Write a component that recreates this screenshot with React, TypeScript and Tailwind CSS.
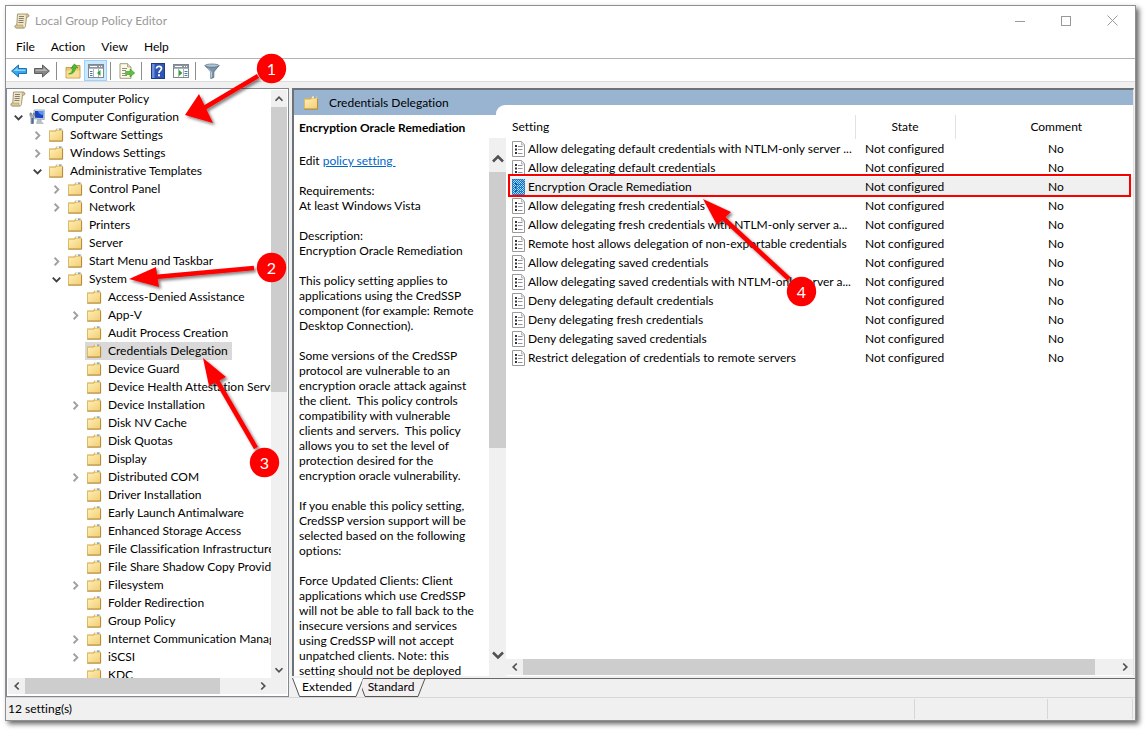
import type { ReactNode } from "react";

type Node = { label: string; level: 0 | 1 | 2 | 3 | 4; state?: "open" | "closed"; icon?: "scroll" | "computer"; selected?: boolean };

const tree: Node[] = [
  { label: "Local Computer Policy", level: 0, icon: "scroll" },
  { label: "Computer Configuration", level: 1, state: "open", icon: "computer" },
  { label: "Software Settings", level: 2, state: "closed" },
  { label: "Windows Settings", level: 2, state: "closed" },
  { label: "Administrative Templates", level: 2, state: "open" },
  { label: "Control Panel", level: 3, state: "closed" },
  { label: "Network", level: 3, state: "closed" },
  { label: "Printers", level: 3 },
  { label: "Server", level: 3 },
  { label: "Start Menu and Taskbar", level: 3, state: "closed" },
  { label: "System", level: 3, state: "open" },
  { label: "Access-Denied Assistance", level: 4 },
  { label: "App-V", level: 4, state: "closed" },
  { label: "Audit Process Creation", level: 4 },
  { label: "Credentials Delegation", level: 4, selected: true },
  { label: "Device Guard", level: 4 },
  { label: "Device Health Attestation Service", level: 4 },
  { label: "Device Installation", level: 4, state: "closed" },
  { label: "Disk NV Cache", level: 4 },
  { label: "Disk Quotas", level: 4 },
  { label: "Display", level: 4 },
  { label: "Distributed COM", level: 4, state: "closed" },
  { label: "Driver Installation", level: 4 },
  { label: "Early Launch Antimalware", level: 4 },
  { label: "Enhanced Storage Access", level: 4 },
  { label: "File Classification Infrastructure", level: 4 },
  { label: "File Share Shadow Copy Provider", level: 4 },
  { label: "Filesystem", level: 4, state: "closed" },
  { label: "Folder Redirection", level: 4 },
  { label: "Group Policy", level: 4 },
  { label: "Internet Communication Management", level: 4, state: "closed" },
  { label: "iSCSI", level: 4, state: "closed" },
  { label: "KDC", level: 4 },
];

const indents = ["pl-px", "pl-0", "pl-[19px]", "pl-[38px]", "pl-[57px]"];

const settings = [
  "Allow delegating default credentials with NTLM-only server ...",
  "Allow delegating default credentials",
  "Encryption Oracle Remediation",
  "Allow delegating fresh credentials",
  "Allow delegating fresh credentials with NTLM-only server a...",
  "Remote host allows delegation of non-exportable credentials",
  "Allow delegating saved credentials",
  "Allow delegating saved credentials with NTLM-only server a...",
  "Deny delegating default credentials",
  "Deny delegating fresh credentials",
  "Deny delegating saved credentials",
  "Restrict delegation of credentials to remote servers",
];

const description = [
  ["Requirements:", "At least Windows Vista"],
  ["Description:", "Encryption Oracle Remediation"],
  ["This policy setting applies to", "applications using the CredSSP", "component (for example: Remote", "Desktop Connection)."],
  ["Some versions of the CredSSP", "protocol are vulnerable to an", "encryption oracle attack against", "the client.  This policy controls", "compatibility with vulnerable", "clients and servers.  This policy", "allows you to set the level of", "protection desired for the", "encryption oracle vulnerability."],
  ["If you enable this policy setting,", "CredSSP version support will be", "selected based on the following", "options:"],
  ["Force Updated Clients: Client", "applications which use CredSSP", "will not be able to fall back to the", "insecure versions and services", "using CredSSP will not accept", "unpatched clients. Note: this", "setting should not be deployed"],
];

function FolderIcon() {
  return (
    <svg className="h-4 w-4 shrink-0" viewBox="0 0 16 16" aria-hidden="true">
      <path d="M1 3.500h6l1.500-2H14l.5 2v10.500H1z" fill="#dcb55c" />
      <rect x="9" y="1.600" width="5" height="2" fill="#fff" />
      <rect x="11" y="1.600" width="2.500" height="1.200" fill="#4a90d9" />
      <path d="M1.500 4.200h6.200l1.300-1h5.500v10.600h-13z" fill="url(#folder)" />
      <path d="M1.500 4.200h6.200l1.300-1h5.500v10.600h-13z" fill="none" stroke="#dcb55c" strokeWidth=".8" />
      <path d="M1.200 14.200h13.400V4" fill="none" stroke="#ad8535" strokeWidth=".9" />
    </svg>
  );
}

function ScrollIcon() {
  return (
    <svg className="h-4 w-4 shrink-0" viewBox="0 0 16 16" aria-hidden="true">
      <path d="M3.500 1h9.500c2.400 0 2.400 3 .6 3h-1.100l-1 8.500c0 1.500-.5 2.500-2 2.500H2.200c-1.800 0-1.500-3 0-3h.6z" fill="#f1e7c6" stroke="#9c8f6b" strokeWidth=".9" />
      <path d="M2 12h7c-.6 1 0 2.800 1 2.900H2.200C.8 15 .8 12 2 12zM12.600 1.300c-.9.700-.4 2.600.1 2.700h1c1.500-.1 1.400-2.500-.4-2.700z" fill="#d9c58a" stroke="#9c8f6b" strokeWidth=".5" />
      <path d="M5 3.500h5M4.800 5.500h5M4.600 7.500h5M4.400 9.500h5" stroke="#77736a" strokeWidth=".9" />
    </svg>
  );
}

function ComputerIcon() {
  return (
    <svg className="h-4 w-4 shrink-0" viewBox="0 0 16 16" aria-hidden="true">
      <path d="M5 1h10.300v9.500L5 9.800z" fill="#dfe5ea" stroke="#8c98a4" strokeWidth=".7" />
      <path d="M6 2h8.300v7.300L6 8.800z" fill="#1747c4" />
      <path d="M9 2h5.300v4C12 6 10 5 9 2z" fill="#5b93ee" />
      <path d="M8.500 10.500h3.500l.5 2.500 2 1.500h-7z" fill="#b9c1c8" stroke="#89939c" strokeWidth=".4" />
      <path d="M1 4v2.500L2 8v6.500h2.500V8l1-1.500V4H4.300v2H2.400V4z" fill="#aeb6bd" stroke="#59636c" strokeWidth=".6" />
      <path d="M2.600 9h1.500v5.500H2.600z" fill="#426fa5" />
    </svg>
  );
}

function PolicyIcon({ active }: { active?: boolean }) {
  return (
    <svg className="h-4 w-4 shrink-0" viewBox="0 0 16 16" aria-hidden="true">
      <path d="M.5.5h9L12.500 3.500v12H.5z" fill="#fff" stroke="#9a9a9a" />
      <path d="M9.500.5v3.500h3" fill="#e8e8e8" stroke="#aaa" strokeWidth=".8" />
      <path d="M3 4h2v2H3zM3 7.500h2v2H3zM3 11h2v2H3z" fill="#333" />
      <path d="M6 5.500h4.500M6 8.500h4.500M6 12.500h4.500" stroke="#8d91a0" />
      {active && <rect width="13" height="16" fill="url(#checker)" />}
    </svg>
  );
}

type Dir = "up" | "down" | "left" | "right";
const chevronPaths: Record<Dir, string> = {
  up: "M4 10l4-4 4 4",
  down: "M4 6l4 4 4-4",
  left: "M10 4L6 8l4 4",
  right: "M6 4l4 4-4 4",
};

function Chevron({ dir, className }: { dir: Dir; className: string }) {
  return (
    <svg className={className} viewBox="0 0 16 16" fill="none" stroke="currentColor" strokeWidth="2" aria-hidden="true">
      <path d={chevronPaths[dir]} />
    </svg>
  );
}

function ScrollButton({ dir, big }: { dir: Dir; big?: boolean }) {
  return (
    <button type="button" aria-label={`Scroll ${dir}`} className="flex h-full w-full items-center justify-center text-[#505050]">
      <Chevron dir={dir} className={big ? "h-5 w-5 shrink-0" : "h-[14px] w-[14px] shrink-0"} />
    </button>
  );
}

function TreePane() {
  return (
    <nav aria-label="Policy tree" className="flex w-[283px] shrink-0 flex-col border border-[#828790] bg-white p-px">
      <div className="flex min-h-0 flex-1">
        <ul className="min-w-0 flex-1 overflow-hidden">
          {tree.map((n) => (
            <li key={n.label} className={`flex h-[18px] items-center ${indents[n.level]}`}>
              {n.level > 0 && (
                <span className="flex w-5 shrink-0 items-center justify-center">
                  {n.state && (
                    <button type="button" aria-label={`Toggle ${n.label}`} className={n.state === "open" ? "text-[#404040]" : "text-[#a0a0a0]"}>
                      <Chevron dir={n.state === "open" ? "down" : "right"} className="h-[15px] w-[15px]" />
                    </button>
                  )}
                </span>
              )}
              <button type="button" className={`flex h-[18px] items-center gap-[6px] pr-1 pl-px whitespace-nowrap ${n.selected ? "bg-[#d9d9d9]" : ""}`}>
                {n.icon === "scroll" ? <ScrollIcon /> : n.icon === "computer" ? <ComputerIcon /> : <FolderIcon />}
                <span>{n.label}</span>
              </button>
            </li>
          ))}
        </ul>
        <div className="flex w-4 shrink-0 flex-col bg-[#f0f0f0]">
          <div className="h-[17px]"><ScrollButton dir="up" /></div>
          <div className="flex flex-1 flex-col">
            <div className="grow-[286] bg-[#cdcdcd]" />
            <div className="grow-[270]" />
          </div>
          <div className="h-[17px]"><ScrollButton dir="down" /></div>
        </div>
      </div>
      <div className="mb-px flex h-4 shrink-0 bg-[#f0f0f0]">
        <div className="w-[17px]"><ScrollButton dir="left" /></div>
        <div className="flex flex-1">
          <div className="grow-[195] bg-[#cdcdcd]" />
          <div className="grow-[34]" />
        </div>
        <div className="w-[17px]"><ScrollButton dir="right" /></div>
        <div className="w-4" />
      </div>
    </nav>
  );
}

function DescriptionPane() {
  return (
    <section className="flex w-[212px] shrink-0 flex-col">
      <h2 className="flex h-[23px] shrink-0 items-center pt-[3px] pl-[5px] font-bold whitespace-nowrap">Encryption Oracle Remediation</h2>
      <div className="flex min-h-0 flex-1">
        <div className="min-w-0 flex-1 overflow-hidden pt-[15px] pl-[5px] leading-[15px] whitespace-pre">
          <p className="mb-[15px]">Edit <a href="#policy" className="text-[#0066cc] underline">policy setting </a></p>
          {description.map((lines) => (
            <p key={lines[0]} className="mb-[15px]">{lines.join("\n")}</p>
          ))}
        </div>
        <div className="flex w-[17px] shrink-0 flex-col bg-[#f0f0f0]">
          <div className="h-[34px] pt-2"><ScrollButton dir="up" big /></div>
          <div className="flex flex-1 flex-col">
            <div className="grow-[276] bg-[#cdcdcd]" />
            <div className="grow-[194]" />
          </div>
          <div className="h-[34px] pb-2"><ScrollButton dir="down" big /></div>
        </div>
      </div>
    </section>
  );
}

function SettingsPane() {
  return (
    <section className="flex min-w-0 flex-1 flex-col">
      <div className="relative min-h-0 flex-1 overflow-hidden pl-[2px]">
        <table className="w-[649px] table-fixed border-collapse">
          <colgroup>
            <col className="w-[347px]" />
            <col className="w-[100px]" />
            <col className="w-[202px]" />
          </colgroup>
          <thead>
            <tr className="h-6">
              <th className="border-r border-[#e2e2e2] p-0 pl-1 text-left font-normal">Setting</th>
              <th className="border-r border-[#e2e2e2] p-0 font-normal">State</th>
              <th className="p-0 font-normal">Comment</th>
            </tr>
          </thead>
          <tbody>
            {settings.map((s, i) => (
              <tr key={s} className={`h-[19px] ${i === 2 ? "bg-[#f0f0f0]" : ""}`}>
                <td className="p-0">
                  <button type="button" className="flex h-[19px] items-center pl-[4px] whitespace-nowrap">
                    <PolicyIcon active={i === 2} />
                    <span>{s}</span>
                  </button>
                </td>
                <td className="p-0 pl-[10px] whitespace-nowrap">Not configured</td>
                <td className="p-0 text-center">No</td>
              </tr>
            ))}
          </tbody>
        </table>
        <div className="pointer-events-none absolute top-[59px] right-[2px] left-[2px] h-[23px] border-2 border-[#f80000]" />
      </div>
      <div className="mb-px flex h-4 shrink-0 bg-[#f0f0f0]">
        <div className="w-[17px]"><ScrollButton dir="left" /></div>
        <div className="flex flex-1">
          <div className="grow-[572] bg-[#cdcdcd]" />
          <div className="grow-[21]" />
        </div>
        <div className="w-[17px]"><ScrollButton dir="right" /></div>
      </div>
    </section>
  );
}

function ToolButton({ label, active, children }: { label: string; active?: boolean; children: ReactNode }) {
  return (
    <button type="button" aria-label={label} className={`flex h-[21px] w-[23px] items-center justify-center ${active ? "bg-[#cce8ff] outline outline-[#99d1ff] -outline-offset-1" : ""}`}>
      <svg className="h-4 w-4" viewBox="0 0 16 16">{children}</svg>
    </button>
  );
}

const Separator = () => <span className="mr-1 ml-[3px] h-[18px] w-px bg-[#8d8d8d]" />;

function Pane({ flip }: { flip?: boolean }) {
  return (
    <>
      <rect x=".5" y="1.500" width="15" height="13" fill="#fff" stroke="#7f8790" />
      <path d="M1 2h14v3H1z" fill="#8c969f" />
      <path d="M2 3.500h7M11 3.500h1M13 3.500h1" stroke="#fff" />
      <path d="M1 5.500h14M5.500 6v8M10.500 6v8" stroke="#9ba3aa" strokeWidth=".8" />
      {flip ? (
        <>
          <path d="M6 7v6l3.500-3z" fill="#2fa52c" />
          <path d="M11.500 8.500h3M11.500 10.500h3M11.500 12.500h3" stroke="#4a76b8" />
        </>
      ) : (
        <>
          <path d="M12.500 7v6L9 10z" fill="#2fa52c" />
          <path d="M2 8.500h2.500M2 10.500h2.500M2 12.500h2.500" stroke="#4a76b8" />
        </>
      )}
    </>
  );
}

function Toolbar() {
  return (
    <div className="flex h-[23px] shrink-0 items-center border-b border-[#dcdcdc] bg-white pt-px pl-px">
      <ToolButton label="Back">
        <path d="M.6 8l6.900-6v3.500h8v5h-8V14z" fill="#35a7ea" stroke="#1c6fb4" />
        <path d="M2.500 8l4-3.400v2h8V8z" fill="#8ad4fa" />
      </ToolButton>
      <ToolButton label="Forward">
        <path d="M15.400 8L8.500 2v3.500h-8v5h8V14z" fill="#878787" stroke="#5d5d5d" />
        <path d="M13.500 8l-4-3.400v2h-8V8z" fill="#b5b5b5" />
      </ToolButton>
      <Separator />
      <ToolButton label="Up one level">
        <path d="M1 4.500h6l1-2h7v12.500H1z" fill="#edc96e" stroke="#b88f38" strokeWidth=".8" />
        <path d="M1.500 7.500h13v7h-13z" fill="#f8df95" />
        <path d="M3.500 11C6 10.500 7.500 8.500 8 5L6 5.500 9.500.8l3.500 4.200-2.300-.2C10 8.500 8 11.500 3.500 11z" fill="#45bd34" stroke="#238a1c" strokeWidth=".5" />
      </ToolButton>
      <ToolButton label="Show or hide console tree" active><Pane /></ToolButton>
      <Separator />
      <ToolButton label="Export list">
        <path d="M1 .7h7.500L12 4v11.300H1z" fill="#fffbe5" stroke="#999274" strokeWidth=".9" />
        <path d="M8.500.7V4H12" fill="#e7e0bf" stroke="#999274" strokeWidth=".7" />
        <path d="M3 5.500h5M3 7.500h4M3 10.500h3M3 12.500h5" stroke="#8c8c8c" />
        <path d="M6.500 8.500h4.500V6l4.700 4-4.700 4v-2.500H6.500z" fill="#61c13e" stroke="#329123" strokeWidth=".6" />
      </ToolButton>
      <Separator />
      <ToolButton label="Help">
        <rect x="1.500" y=".5" width="13" height="15" fill="#2f56b4" stroke="#1c3a85" />
        <path d="M2 1h2.500v14H2z" fill="#6d8fdb" />
        <path d="M6.500 5.600c0-3 5-2.900 5 0 0 2-2.500 2-2.500 4.300" fill="none" stroke="#fff" strokeWidth="1.700" />
        <rect x="8" y="11.300" width="2" height="2" fill="#fff" />
      </ToolButton>
      <ToolButton label="Show or hide action pane"><Pane flip /></ToolButton>
      <Separator />
      <ToolButton label="Filter">
        <path d="M1 2.500h14L9.800 9v5.500l-3 1V9z" fill="#7893aa" stroke="#526b80" strokeWidth=".8" />
        <ellipse cx="8" cy="2.600" rx="7" ry="1.600" fill="#b4c6d4" stroke="#526b80" strokeWidth=".7" />
        <path d="M3.500 5l3.900 4v5.500" fill="none" stroke="#c4d4e0" />
      </ToolButton>
    </div>
  );
}

const marks = [
  { n: 1, cx: 271.5, cy: 68.5, head: "185,115 199,94 213,123", x1: 258, y1: 76, x2: 204, y2: 108 },
  { n: 2, cx: 271.5, cy: 267.5, head: "129,279 156,267 159,287", x1: 254, y1: 268, x2: 155, y2: 277 },
  { n: 3, cx: 264.5, cy: 462.5, head: "203,358 226,377 209,386", x1: 256, y1: 448, x2: 216, y2: 379 },
  { n: 4, cx: 801.5, cy: 291.5, head: "703,199 731,212 717,225", x1: 789, y1: 279, x2: 722, y2: 217 },
];

function Annotations() {
  return (
    <svg className="pointer-events-none absolute top-0 left-0 h-full w-full overflow-hidden" aria-hidden="true">
      <defs>
        <linearGradient id="folder" x1="0" y1="0" x2="1" y2="1">
          <stop offset="0" stopColor="#fff0b8" />
          <stop offset="1" stopColor="#f2cd72" />
        </linearGradient>
        <pattern id="checker" width="2" height="2" patternUnits="userSpaceOnUse">
          <rect width="2" height="2" fill="#0078d7" fillOpacity=".3" />
          <path d="M0 0h1v1H0zM1 1h1v1H1z" fill="#0078d7" />
        </pattern>
        <filter id="shade" x="-20%" y="-20%" width="150%" height="150%">
          <feDropShadow dx="2" dy="2" stdDeviation="1.500" floodColor="#000" floodOpacity=".5" />
        </filter>
      </defs>
      {marks.map((m) => (
        <g key={m.n}>
          <g filter="url(#shade)" fill="#f00" stroke="#f00">
            <line x1={m.x1} y1={m.y1} x2={m.x2} y2={m.y2} strokeWidth="4.500" />
            <polygon points={m.head} strokeWidth="0" />
          </g>
          <circle cx={m.cx} cy={m.cy} r="14.700" fill="#f00" />
          <text x={m.cx} y={m.cy + 6} textAnchor="middle" fill="#fff" className="text-[16px]">{m.n}</text>
        </g>
      ))}
    </svg>
  );
}

export default function App() {
  return (
    <div className="relative h-screen overflow-hidden bg-white pt-[5px] pr-[9px] pb-[9px] pl-[5px] font-['Lato','Open_Sans',sans-serif] text-[12px] leading-[16px] text-black [font-variant-ligatures:none]">
      <div className="flex h-full flex-col border border-[#8f8f8f] bg-[#f0f0f0] shadow-[3px_3px_5px_rgba(0,0,0,0.6)]">
        <header className="flex h-[29px] shrink-0 items-center gap-[5px] bg-white pl-2 text-[#999]">
          <ScrollIcon />
          <h1 className="flex-1">Local Group Policy Editor</h1>
          <div className="flex items-center">
            <button type="button" aria-label="Minimize" className="flex h-7 w-[46px] items-center justify-center">
              <svg className="h-[10px] w-[10px]" viewBox="0 0 10 10" stroke="#999"><path d="M0 5.500h10" /></svg>
            </button>
            <button type="button" aria-label="Maximize" className="flex h-7 w-[46px] items-center justify-center">
              <svg className="h-[10px] w-[10px]" viewBox="0 0 10 10" fill="none" stroke="#999"><rect x=".5" y=".5" width="9" height="9" /></svg>
            </button>
            <button type="button" aria-label="Close" className="flex h-7 w-[46px] items-center justify-center">
              <svg className="h-[11px] w-[11px]" viewBox="0 0 11 11" stroke="#999"><path d="M.5.5l10 10M10.500.5l-10 10" /></svg>
            </button>
          </div>
        </header>
        <div role="menubar" className="flex h-[24px] shrink-0 items-center gap-4 border-b border-[#b4b4b4] bg-white pl-[10px]">
          {["File", "Action", "View", "Help"].map((m) => (
            <button key={m} type="button" role="menuitem">{m}</button>
          ))}
        </div>
        <Toolbar />
        <main className="flex min-h-0 flex-1 gap-[3px] pt-[6px]">
          <TreePane />
          <div className="flex min-w-0 flex-1 flex-col">
            <div className="mr-px flex min-h-0 flex-1 flex-col border-t-2 border-r border-l-2 border-t-[#6d7178] border-r-[#e3e3e3] border-l-[#6d7178] bg-white">
              <div className="flex h-[25px] shrink-0 bg-[#99b4d1]">
                <div className="flex w-[202px] shrink-0 items-center gap-[10px] pl-[9px] whitespace-nowrap">
                  <FolderIcon />
                  Credentials Delegation
                </div>
                <div className="mt-[15px] flex-1 rounded-tl-[9px] bg-white" />
              </div>
              <div className="flex min-h-0 flex-1">
                <DescriptionPane />
                <SettingsPane />
              </div>
            </div>
            <div className="flex h-[21px] shrink-0 border-t border-[#f0f0f0] pt-px">
              <button type="button" className="relative h-[18px] w-[70px]">
                <svg className="absolute top-0 left-0 h-[19px] w-[73px]" viewBox="0 0 73 19" aria-hidden="true">
                  <path d="M.5 0l7 18.500H64L71.500 0" fill="#fff" stroke="#555" />
                </svg>
                <span className="relative">Extended</span>
              </button>
              <button type="button" className="relative h-[18px] w-[58px]">
                <svg className="absolute top-0 left-0 h-[19px] w-[64px]" viewBox="0 0 64 19" aria-hidden="true">
                  <path d="M1 .5h62L56 18.500H3L-1 8z" fill="#f3eef0" />
                  <path d="M1 .5h62L56 18.500H3L-1 8" fill="none" stroke="#555" />
                </svg>
                <span className="relative">Standard</span>
              </button>
              <div className="flex-1 border-t border-[#696969]" />
            </div>
          </div>
        </main>
        <footer className="flex h-[23px] shrink-0 items-stretch border-t border-[#d7d7d7] py-px">
          <span className="flex flex-1 items-center pl-[2px]">12 setting(s)</span>
          <span className="w-[133px] border-l border-[#d7d7d7]" />
          <span className="mr-[2px] w-[86px] border-x border-[#d7d7d7]" />
        </footer>
      </div>
      <Annotations />
    </div>
  );
}
